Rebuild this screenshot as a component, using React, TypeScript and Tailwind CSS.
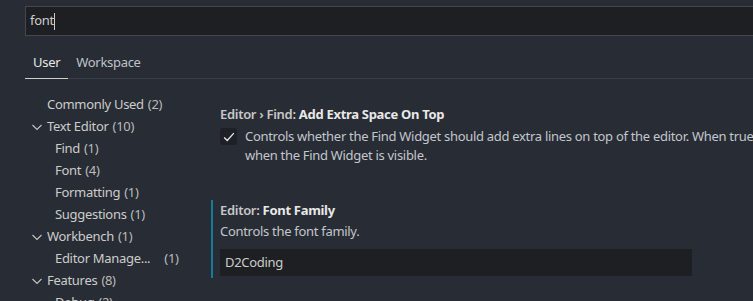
import React from "react";

const font = { fontFamily: '"Segoe UI", "Noto Sans", "Open Sans", sans-serif' };

function Chevron() {
  return (
    <svg width="16" height="16" viewBox="0 0 16 16" className="shrink-0">
      <path d="M3.5 6 L8 10.5 L12.5 6" fill="none" stroke="#c5c5c5" strokeWidth="1.1" />
    </svg>
  );
}

function TreeRow({ label, count, level, chevron, gap }: { label: string; count: string; level: 0 | 1; chevron?: boolean; gap?: boolean }) {
  return (
    <div className={`h-[22px] flex items-center ${level === 0 ? "pl-[29px]" : "pl-[55px]"}`}>
      {level === 0 && (chevron ? <span className="w-[18px] flex"><Chevron /></span> : <span className="w-[18px]" />)}
      <span className="text-[#cccccc] whitespace-nowrap">{label}</span>
      <span className={`text-[#bbbbbb] whitespace-nowrap ${gap ? "ml-[14px]" : "ml-[4px]"}`}>{count}</span>
    </div>
  );
}

export default function App() {
  return (
    <div className="w-[753px] h-[301px] overflow-hidden bg-[#282c34] text-[13px] tracking-[-0.3px] relative" style={font}>
      <div className="pl-[25px] pt-[6px]">
        <div className="h-[30px] w-[760px] bg-[#1e1f23] border border-[#45474b] flex items-center pl-[4px]">
          <span className="text-[#cccccc] text-[13px]">font</span>
          <span className="w-px h-[17px] bg-[#cccccc] ml-[0px]" />
        </div>
        <div className="mt-[12px] flex border-b border-[#3b3e43] h-[31px] items-stretch">
          <div className="px-[8px] flex items-center text-[#e7e7e7] border-b border-[#d0d0d0] -mb-px">User</div>
          <div className="ml-[8px] flex items-center text-[#bfc3c9]">Workspace</div>
        </div>
      </div>
      <div className="flex">
        <div className="w-[205px] pt-[15px] shrink-0">
          <TreeRow label="Commonly Used" count="(2)" level={0} />
          <TreeRow label="Text Editor" count="(10)" level={0} chevron />
          <TreeRow label="Find" count="(1)" level={1} />
          <TreeRow label="Font" count="(4)" level={1} />
          <TreeRow label="Formatting" count="(1)" level={1} />
          <TreeRow label="Suggestions" count="(1)" level={1} />
          <TreeRow label="Workbench" count="(1)" level={0} chevron />
          <TreeRow label="Editor Manage..." count="(1)" level={1} gap />
          <TreeRow label="Features" count="(8)" level={0} chevron />
          <TreeRow label="Debug" count="(2)" level={1} />
        </div>
        <div className="flex-1 pt-[26px] pl-[6px]">
          <div className="pl-[9px]">
            <div className="text-[#c8c8c8] font-semibold whitespace-nowrap leading-[18px]">
              Editor › Find: <span className="text-[#e8e8e8] font-bold">Add Extra Space On Top</span>
            </div>
            <div className="flex mt-[4px]">
              <div className="w-[17px] h-[17px] bg-[#1d2026] rounded-[3px] flex items-center justify-center shrink-0 mt-[1px]">
                <svg width="14" height="14" viewBox="0 0 16 16">
                  <path d="M2.5 8.5 L6 12 L13.5 3.5" fill="none" stroke="#e8e8e8" strokeWidth="1.5" />
                </svg>
              </div>
              <div className="ml-[8px] text-[#c3c7cd] leading-[19px] whitespace-nowrap">
                Controls whether the Find Widget should add extra lines on top of the editor. When true, you can scroll beyond the first line
                <br />
                when the Find Widget is visible.
              </div>
            </div>
          </div>
          <div className="mt-[35px] border-l-2 border-[#167a9c] pl-[7px] pb-[2px]">
            <div className="text-[#c8c8c8] font-semibold leading-[18px] pt-[1px]">
              Editor: <span className="text-[#e8e8e8] font-bold">Font Family</span>
            </div>
            <div className="text-[#c3c7cd] mt-[3px] leading-[19px]">Controls the font family.</div>
            <div className="mt-[8px] w-[472px] h-[27px] bg-[#1e1f23] flex items-center pl-[5px] text-[#cccccc]">D2Coding</div>
          </div>
        </div>
      </div>
    </div>
  );
}
